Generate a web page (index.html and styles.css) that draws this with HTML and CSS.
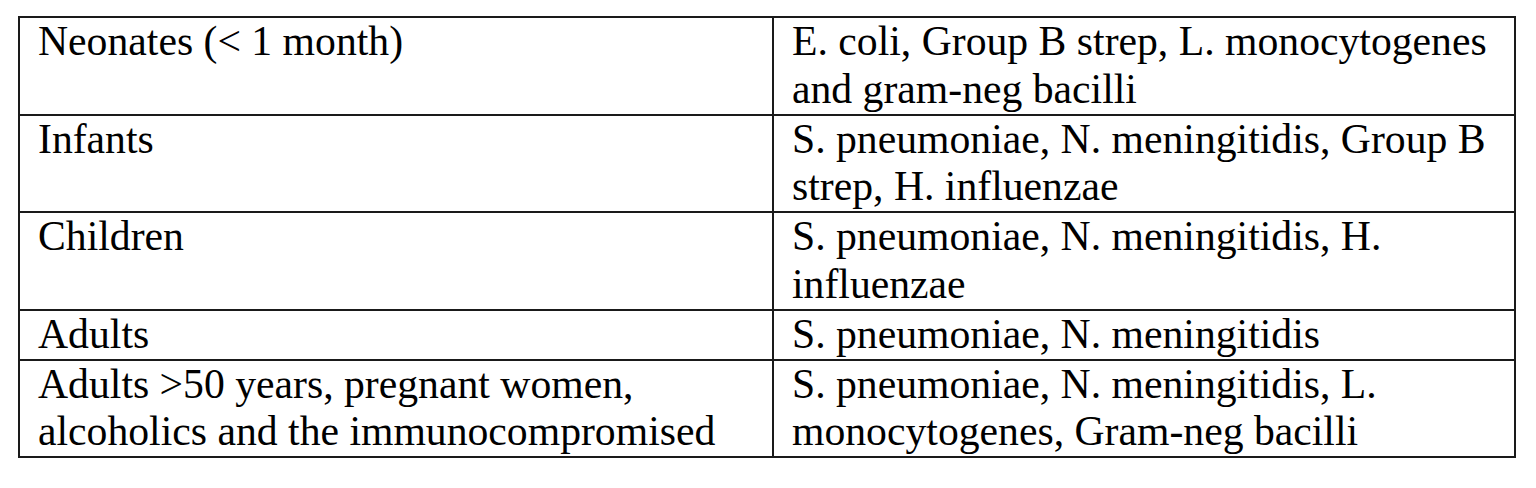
FILE: index.html
```html
<!DOCTYPE html>
<html>
<head>
<meta charset="utf-8">
<link rel="stylesheet" href="styles.css">
</head>
<body>
<table class="pathogens">
  <colgroup><col class="col-group"><col class="col-org"></colgroup>
  <tr><td>Neonates (&lt; 1 month)</td><td>E. coli, Group B strep, L. monocytogenes and gram-neg bacilli</td></tr>
  <tr><td>Infants</td><td>S. pneumoniae, N. meningitidis, Group B strep, H. influenzae</td></tr>
  <tr><td>Children</td><td>S. pneumoniae, N. meningitidis, H. influenzae</td></tr>
  <tr><td>Adults</td><td>S. pneumoniae, N. meningitidis</td></tr>
  <tr><td>Adults &gt;50 years, pregnant women, alcoholics and the immunocompromised</td><td>S. pneumoniae, N. meningitidis, L. monocytogenes, Gram-neg bacilli</td></tr>
</table>
</body>
</html>
```
FILE: styles.css
```css
html, body {
  margin: 0;
  background: #ffffff;
}
body {
  padding: 16px 0 0 18px;
}
.pathogens {
  border-collapse: collapse;
  table-layout: fixed;
  width: 1496px;
  font-family: "Liberation Serif", "Times New Roman", serif;
  font-size: 41.7px;
  line-height: 47.8px;
  color: #000;
}
.col-group { width: 754px; }
.col-org { width: 742px; }
.pathogens td {
  border: 2px solid #1a1a1a;
  padding: 0 18px;
  vertical-align: top;
  text-align: left;
}
```
